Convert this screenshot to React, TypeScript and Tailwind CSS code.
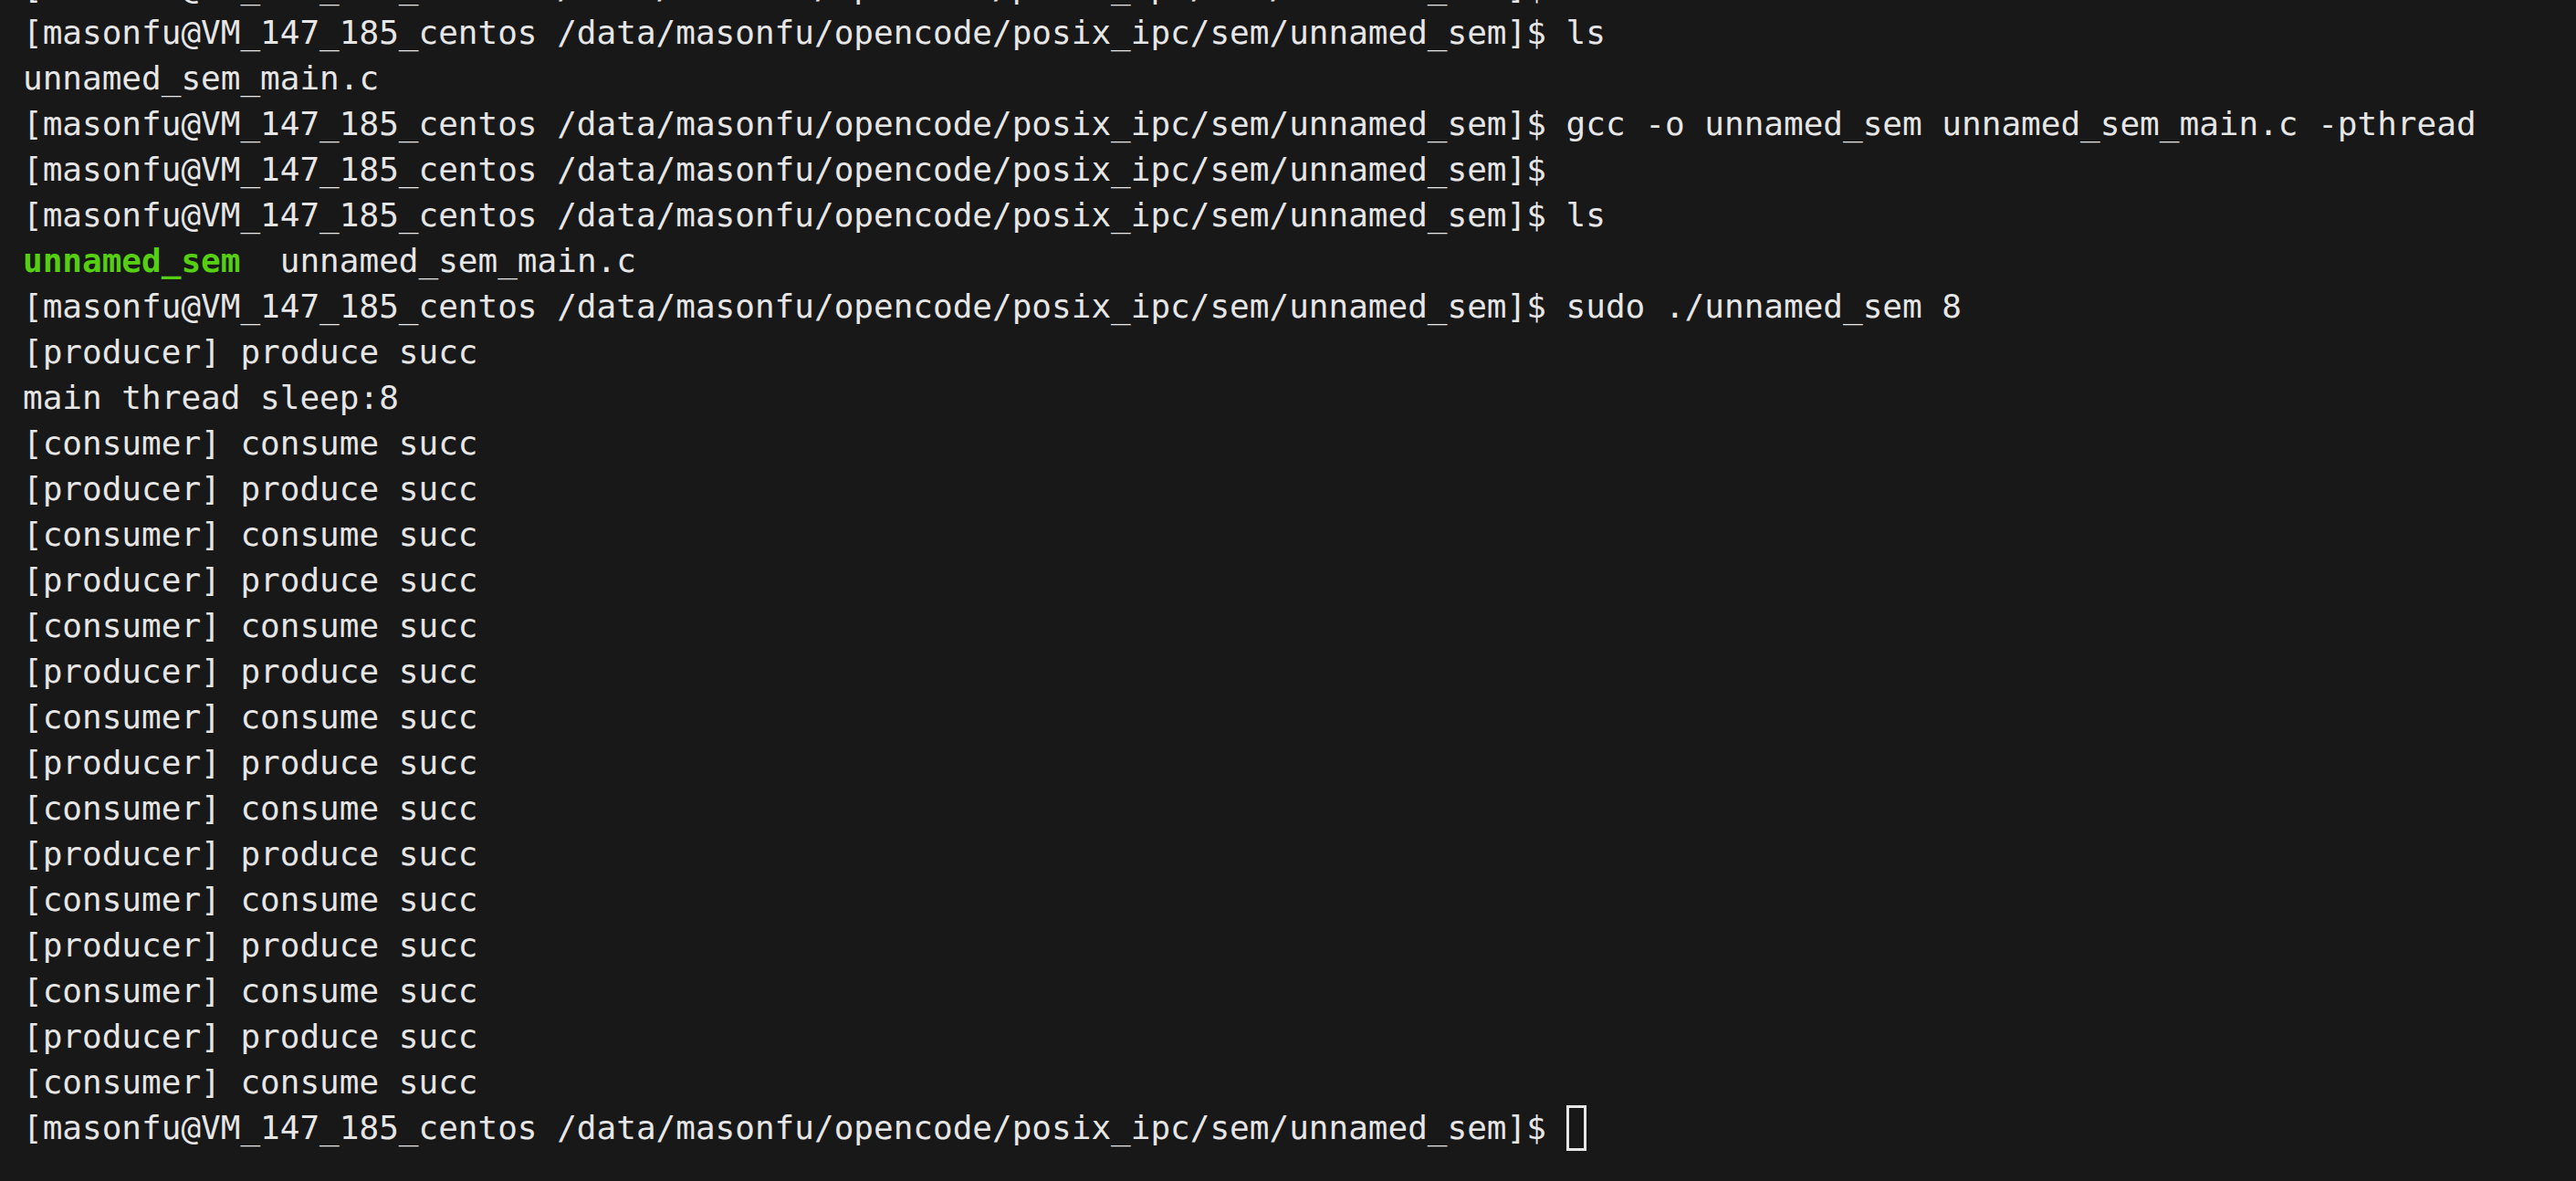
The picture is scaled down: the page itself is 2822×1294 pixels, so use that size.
const PROMPT = "[masonfu@VM_147_185_centos /data/masonfu/opencode/posix_ipc/sem/unnamed_sem]$";

const Line = ({ children }: { children?: React.ReactNode }) => (
  <div className="h-[50px] leading-[50px] whitespace-pre">{children}</div>
);

const output: string[] = [];
output.push("[producer] produce succ");
output.push("main thread sleep:8");
for (let i = 0; i < 7; i++) {
  output.push("[consumer] consume succ");
  output.push("[producer] produce succ");
}
output.push("[consumer] consume succ");

const App = () => {
  return (
    <div className="w-[2822px] h-[1294px] overflow-hidden bg-[#181818] text-[#e6e6e6] text-[36px] pl-[25px] font-['DejaVu_Sans_Mono',monospace]">
      <div className="-mt-[39px]">
        <Line>{PROMPT}</Line>
        <Line>{PROMPT} ls</Line>
        <Line>unnamed_sem_main.c</Line>
        <Line>{PROMPT} gcc -o unnamed_sem unnamed_sem_main.c -pthread</Line>
        <Line>{PROMPT}</Line>
        <Line>{PROMPT} ls</Line>
        <Line>
          <span className="font-bold text-[#56cf12]">unnamed_sem</span>  unnamed_sem_main.c
        </Line>
        <Line>{PROMPT} sudo ./unnamed_sem 8</Line>
        {output.map((t, i) => (
          <Line key={i}>{t}</Line>
        ))}
        <Line>
          <span className="inline-flex items-center h-[50px] align-top">
            {PROMPT + " "}
            <span className="inline-block w-[22px] h-[50px] border-[3px] border-[#e6e6e6]" />
          </span>
        </Line>
      </div>
    </div>
  );
};

export default App;
